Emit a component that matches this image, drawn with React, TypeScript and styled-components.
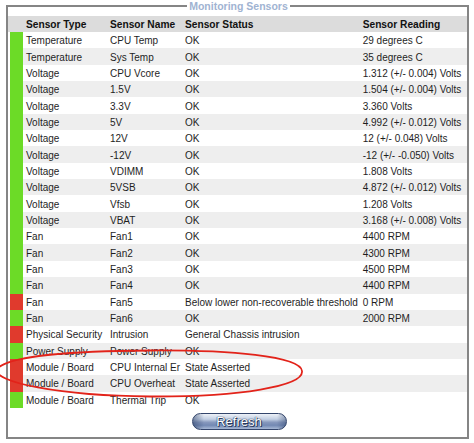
import React from "react";
import styled, { createGlobalStyle } from "styled-components";

const Global = createGlobalStyle`
  html, body { margin: 0; padding: 0; background: #ffffff; }
  body { font-family: "Liberation Sans", Arial, Helvetica, sans-serif; color: #1c1c1c; }
`;

const Page = styled.div`
  position: relative;
  width: 474px;
  height: 443px;
  overflow: hidden;
  background: #fff;
  padding-top: 5px;
  box-sizing: border-box;
`;

const Panel = styled.section`
  margin-left: 6px;
  width: 463px;
  box-sizing: border-box;
  border: 2px solid #858585;
  padding: 0 0 7px;
  display: flex;
  flex-direction: column;
`;

const Legend = styled.div`
  align-self: center;
  margin: -7px 0 4px 2px;
  padding: 0 2px;
  background: #fff;
  font-size: 10.5px;
  line-height: 12px;
  font-weight: bold;
  color: #9fb3d2;
`;

const Table = styled.div`
  display: flex;
  flex-direction: column;
`;

const cols = "13px 84px 75px 177.7px 1fr";

const HeaderRow = styled.div`
  display: grid;
  grid-template-columns: 2px ${cols};
  height: 16px;
  align-items: center;
  background: #dcdcdc;
`;

const HeadCell = styled.div`
  padding: 1px 3px 0;
  font-size: 10.2px;
  font-weight: bold;
  color: #111;
  white-space: nowrap;
  overflow: hidden;
`;

const DataRow = styled.div<{ $alt: boolean }>`
  display: grid;
  grid-template-columns: ${cols};
  margin-left: 2px;
  height: 16.35px;
  align-items: stretch;
  background: ${(p) => (p.$alt ? "#eeeeee" : "#ffffff")};
`;

const StatusSwatch = styled.div<{ $ok: boolean }>`
  background: ${(p) => (p.$ok ? "#6cdb27" : "#e03a2d")};
`;

const Cell = styled.div`
  display: flex;
  align-items: center;
  padding: 1px 3px 0;
  font-size: 10px;
  color: #1e1e1e;
  white-space: nowrap;
  overflow: hidden;
`;

const ButtonBar = styled.div`
  display: flex;
  justify-content: center;
  padding-top: 5px;
  padding-left: 3px;
`;

const RefreshButton = styled.button`
  width: 95px;
  height: 17px;
  padding: 0;
  border: 1px solid #34466c;
  border-radius: 9px;
  background:
    linear-gradient(to right, rgba(40, 60, 100, 0.5) 0px, rgba(40, 60, 100, 0) 11px, rgba(40, 60, 100, 0) 84px, rgba(40, 60, 100, 0.5) 95px),
    linear-gradient(to bottom, #eef2f8 0%, #c2cfe3 35%, #8799bd 55%, #7389b3 75%, #a8b9d6 100%);
  font-family: "Liberation Sans", Arial, sans-serif;
  font-size: 13px;
  line-height: 15px;
  color: #ffffff;
  text-shadow: 0 0 1px #1d2c4f, 0 0 1px #1d2c4f, 1px 1px 0 #2b3b60;
  cursor: pointer;
`;

const Annotation = styled.svg`
  position: absolute;
  left: 0;
  top: 0;
  pointer-events: none;
  overflow: visible;
`;

type Row = { ok: boolean; type: string; name: string; status: string; reading: string };

const rows: Row[] = [
  { ok: true, type: "Temperature", name: "CPU Temp", status: "OK", reading: "29 degrees C" },
  { ok: true, type: "Temperature", name: "Sys Temp", status: "OK", reading: "35 degrees C" },
  { ok: true, type: "Voltage", name: "CPU Vcore", status: "OK", reading: "1.312 (+/- 0.004) Volts" },
  { ok: true, type: "Voltage", name: "1.5V", status: "OK", reading: "1.504 (+/- 0.004) Volts" },
  { ok: true, type: "Voltage", name: "3.3V", status: "OK", reading: "3.360 Volts" },
  { ok: true, type: "Voltage", name: "5V", status: "OK", reading: "4.992 (+/- 0.012) Volts" },
  { ok: true, type: "Voltage", name: "12V", status: "OK", reading: "12 (+/- 0.048) Volts" },
  { ok: true, type: "Voltage", name: "-12V", status: "OK", reading: "-12 (+/- -0.050) Volts" },
  { ok: true, type: "Voltage", name: "VDIMM", status: "OK", reading: "1.808 Volts" },
  { ok: true, type: "Voltage", name: "5VSB", status: "OK", reading: "4.872 (+/- 0.012) Volts" },
  { ok: true, type: "Voltage", name: "Vfsb", status: "OK", reading: "1.208 Volts" },
  { ok: true, type: "Voltage", name: "VBAT", status: "OK", reading: "3.168 (+/- 0.008) Volts" },
  { ok: true, type: "Fan", name: "Fan1", status: "OK", reading: "4400 RPM" },
  { ok: true, type: "Fan", name: "Fan2", status: "OK", reading: "4300 RPM" },
  { ok: true, type: "Fan", name: "Fan3", status: "OK", reading: "4500 RPM" },
  { ok: true, type: "Fan", name: "Fan4", status: "OK", reading: "4400 RPM" },
  { ok: false, type: "Fan", name: "Fan5", status: "Below lower non-recoverable threshold", reading: "0 RPM" },
  { ok: true, type: "Fan", name: "Fan6", status: "OK", reading: "2000 RPM" },
  { ok: false, type: "Physical Security", name: "Intrusion", status: "General Chassis intrusion", reading: "" },
  { ok: true, type: "Power Supply", name: "Power Supply", status: "OK", reading: "" },
  { ok: false, type: "Module / Board", name: "CPU Internal Er", status: "State Asserted", reading: "" },
  { ok: false, type: "Module / Board", name: "CPU Overheat", status: "State Asserted", reading: "" },
  { ok: true, type: "Module / Board", name: "Thermal Trip", status: "OK", reading: "" },
];

export default function App() {
  return (
    <Page>
      <Global />
      <Panel>
        <Legend>Monitoring Sensors</Legend>
        <Table>
          <HeaderRow>
            <span />
            <span />
            <HeadCell>Sensor Type</HeadCell>
            <HeadCell>Sensor Name</HeadCell>
            <HeadCell>Sensor Status</HeadCell>
            <HeadCell>Sensor Reading</HeadCell>
          </HeaderRow>
          {rows.map((r, i) => (
            <DataRow key={i} $alt={i % 2 === 1}>
              <StatusSwatch $ok={r.ok} />
              <Cell>{r.type}</Cell>
              <Cell>{r.name}</Cell>
              <Cell>{r.status}</Cell>
              <Cell>{r.reading}</Cell>
            </DataRow>
          ))}
        </Table>
        <ButtonBar>
          <RefreshButton type="button">Refresh</RefreshButton>
        </ButtonBar>
      </Panel>
      <Annotation width="474" height="443" viewBox="0 0 474 443">
        <path
          d="M 302 371 C 300 356, 230 350, 150 350.5 C 70 351, 8 356, -3 369 C -8 382, 60 396, 150 396.5 C 240 397, 304 386, 302 371 Z"
          fill="none"
          stroke="#e2231a"
          strokeWidth="1.8"
        />
      </Annotation>
    </Page>
  );
}
